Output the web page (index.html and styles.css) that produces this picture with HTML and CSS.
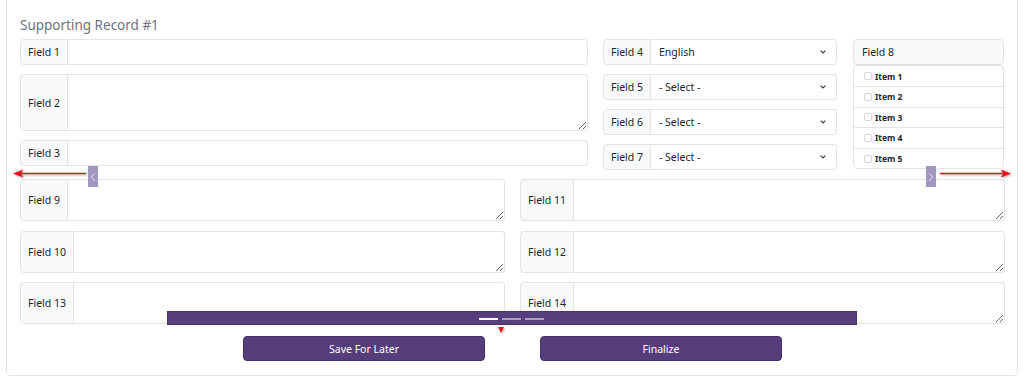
FILE: index.html
```html
<!DOCTYPE html>
<html lang="en">
<head>
<meta charset="utf-8">
<title>Supporting Record</title>
<link rel="stylesheet" href="styles.css">
</head>
<body>
<div class="card">
  <h2 class="title">Supporting Record #1</h2>
  <div class="top-grid">
    <div class="col">
      <div class="group"><span class="label">Field 1</span><input class="control" type="text"></div>
      <div class="group tall"><span class="label">Field 2</span><textarea class="control"></textarea></div>
      <div class="group"><span class="label">Field 3</span><input class="control" type="text"></div>
    </div>
    <div class="col">
      <div class="group"><span class="label">Field 4</span><div class="select-wrap"><select class="control select"><option>English</option></select><svg class="chev" width="6" height="4" viewBox="0 0 6 4"><path d="M0.6 0.6 L3 3 L5.4 0.6" fill="none" stroke="#343a40" stroke-width="1.1"/></svg></div></div>
      <div class="group"><span class="label">Field 5</span><div class="select-wrap"><select class="control select"><option>- Select -</option></select><svg class="chev" width="6" height="4" viewBox="0 0 6 4"><path d="M0.6 0.6 L3 3 L5.4 0.6" fill="none" stroke="#343a40" stroke-width="1.1"/></svg></div></div>
      <div class="group"><span class="label">Field 6</span><div class="select-wrap"><select class="control select"><option>- Select -</option></select><svg class="chev" width="6" height="4" viewBox="0 0 6 4"><path d="M0.6 0.6 L3 3 L5.4 0.6" fill="none" stroke="#343a40" stroke-width="1.1"/></svg></div></div>
      <div class="group"><span class="label">Field 7</span><div class="select-wrap"><select class="control select"><option>- Select -</option></select><svg class="chev" width="6" height="4" viewBox="0 0 6 4"><path d="M0.6 0.6 L3 3 L5.4 0.6" fill="none" stroke="#343a40" stroke-width="1.1"/></svg></div></div>
    </div>
    <div class="col">
      <div class="list-head">Field 8</div>
      <ul class="list">
        <li class="item"><span class="check"></span>Item 1</li>
        <li class="item"><span class="check"></span>Item 2</li>
        <li class="item"><span class="check"></span>Item 3</li>
        <li class="item"><span class="check"></span>Item 4</li>
        <li class="item"><span class="check"></span>Item 5</li>
      </ul>
    </div>
  </div>
  <div class="bottom-grid">
    <div class="group area"><span class="label">Field 9</span><textarea class="control"></textarea></div>
    <div class="group area"><span class="label">Field 11</span><textarea class="control"></textarea></div>
    <div class="group area"><span class="label">Field 10</span><textarea class="control"></textarea></div>
    <div class="group area"><span class="label">Field 12</span><textarea class="control"></textarea></div>
    <div class="group area"><span class="label">Field 13</span><textarea class="control"></textarea></div>
    <div class="group area"><span class="label">Field 14</span><textarea class="control"></textarea></div>
  </div>
  <div class="actions">
    <button class="btn" type="button">Save For Later</button>
    <button class="btn" type="button">Finalize</button>
  </div>
</div>

<svg class="arrow arrow-left" width="76" height="12" viewBox="0 0 76 12">
  <line x1="8" y1="5.5" x2="74" y2="5.5" stroke="#e3141c" stroke-width="1.4"/>
  <polygon points="1,5.5 11,1.5 9,5.5 11,9.5" fill="#e3141c"/>
</svg>
<div class="tab tab-left"><svg width="6" height="10" viewBox="0 0 6 10"><path d="M4.5 1 L1.5 5 L4.5 9" fill="none" stroke="#ece8f4" stroke-width="0.9"/></svg></div>
<div class="tab tab-right"><svg width="6" height="10" viewBox="0 0 6 10"><path d="M1.5 1 L4.5 5 L1.5 9" fill="none" stroke="#ece8f4" stroke-width="0.9"/></svg></div>
<svg class="arrow arrow-right" width="74" height="12" viewBox="0 0 74 12">
  <line x1="1" y1="5.5" x2="66" y2="5.5" stroke="#e3141c" stroke-width="1.4"/>
  <polygon points="72,5.5 62,1.5 64,5.5 62,9.5" fill="#e3141c"/>
</svg>

<div class="slide-bar">
  <span class="dash active"></span>
  <span class="dash"></span>
  <span class="dash"></span>
</div>
<div class="pointer"></div>
</body>
</html>
```

FILE: styles.css
```css
* {
  box-sizing: border-box;
}

html,
body {
  margin: 0;
  padding: 0;
}

body {
  position: relative;
  width: 1023px;
  height: 376px;
  overflow: hidden;
  background: #ffffff;
  color: #212529;
  font-family: "Noto Sans", "Open Sans", sans-serif;
  font-size: 10.5px;
}

.card {
  margin-left: 6px;
  width: 1012px;
  height: 376px;
  border: 1px solid #e1e3e6;
  border-top: 0;
  border-radius: 0 0 5px 5px;
  padding: 16px 12px 13px 13px;
}

.title {
  margin: 0 0 5px;
  font-size: 13.5px;
  line-height: 18px;
  font-weight: 400;
  color: #6c757d;
}

.top-grid {
  display: grid;
  grid-template-columns: 568px 235px 151px;
  column-gap: 15px;
  align-items: start;
}

.top-grid .col:nth-child(2) {
  margin-right: 1px;
}

.col {
  display: flex;
  flex-direction: column;
  gap: 9px;
}

.group {
  display: flex;
  height: 26px;
}

.group.tall {
  height: 57px;
}

.label {
  display: flex;
  align-items: center;
  padding: 0 7px;
  background: #f8f9fa;
  border: 1px solid #e1e3e6;
  border-radius: 4px 0 0 4px;
  white-space: nowrap;
  color: #212529;
}

.control {
  flex: 1;
  min-width: 0;
  margin: 0;
  padding: 0 8px;
  background: #ffffff;
  border: 1px solid #e1e3e6;
  border-left: 0;
  border-radius: 0 4px 4px 0;
  font: inherit;
  color: #212529;
  outline: none;
}

textarea.control {
  resize: vertical;
  padding: 4px 8px;
}

.select-wrap {
  position: relative;
  flex: 1;
  display: flex;
  min-width: 0;
}

.select {
  -webkit-appearance: none;
  appearance: none;
  width: 100%;
  padding-right: 24px;
}

.chev {
  position: absolute;
  right: 11px;
  top: 11px;
  pointer-events: none;
}

.list-head {
  display: flex;
  align-items: center;
  height: 26px;
  padding: 0 8px;
  background: #f8f9fa;
  border: 1px solid #e1e3e6;
  border-radius: 4px;
}

.list {
  list-style: none;
  margin: -9px 0 0;
  padding: 0;
  border: 1px solid #e1e3e6;
  border-radius: 4px;
}

.item {
  display: flex;
  align-items: center;
  gap: 3px;
  height: 20px;
  padding-left: 10px;
  font-size: 8.5px;
  font-weight: 700;
  color: #212529;
}

.item + .item {
  height: 20.6px;
  border-top: 1px solid #e1e3e6;
}

.check {
  width: 8px;
  height: 8px;
  border: 1px solid #d3d6da;
  border-radius: 2px;
  background: #ffffff;
}

.bottom-grid {
  display: grid;
  grid-template-columns: 485px 485px;
  column-gap: 15px;
  row-gap: 9.5px;
  margin-top: 9px;
}

.group.area {
  height: 42px;
}

.actions {
  display: flex;
  justify-content: center;
  gap: 55px;
  margin-top: 12px;
}

.btn {
  width: 242px;
  height: 25px;
  margin: 0;
  padding: 0;
  background: #563d7c;
  border: 1px solid #45306a;
  border-radius: 4px;
  color: #ffffff;
  font: inherit;
  font-size: 10.5px;
}

/* overlays */
.arrow {
  position: absolute;
  top: 168px;
  filter: drop-shadow(1px 1px 1px rgba(0, 0, 0, 0.35));
}

.arrow-left {
  left: 12px;
}

.arrow-right {
  left: 939px;
}

.tab {
  position: absolute;
  top: 166px;
  width: 10px;
  height: 21px;
  background: #a496c2;
  display: flex;
  align-items: center;
  justify-content: center;
}

.tab-left {
  left: 88px;
}

.tab-right {
  left: 926px;
}

.slide-bar {
  position: absolute;
  left: 167px;
  top: 311px;
  width: 690px;
  height: 14px;
  background: #563d7c;
  border: 1px solid #4a336d;
  display: flex;
  align-items: flex-start;
  gap: 4px;
  padding: 6px 0 0 311px;
}

.dash {
  width: 19px;
  height: 2px;
  background: rgba(255, 255, 255, 0.5);
}

.dash.active {
  background: #ffffff;
}

.pointer {
  position: absolute;
  left: 498px;
  top: 327px;
  width: 0;
  height: 0;
  border-left: 3.5px solid transparent;
  border-right: 3.5px solid transparent;
  border-top: 6px solid #e3141c;
  filter: drop-shadow(1px 1px 1px rgba(0, 0, 0, 0.35));
}
```
